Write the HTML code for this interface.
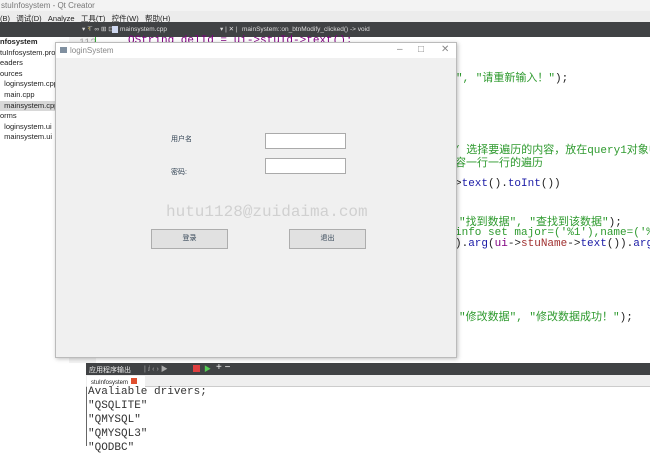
<!DOCTYPE html>
<html><head><meta charset="utf-8"><style>
*{margin:0;padding:0;box-sizing:border-box}
body{width:650px;height:446px;overflow:hidden;background:#fff;position:relative;font-family:"Liberation Sans","Noto Sans CJK SC",sans-serif;font-size:8px;color:#222}
.a{position:absolute;white-space:nowrap}
.mono{font-family:"Liberation Mono","Noto Sans CJK SC",monospace;font-size:11px}
.g{color:#2e9a2e}
.p{color:#800080}
.b{color:#1a1aa6}
</style></head><body>
<div class="a" style="left:0;top:0;width:650px;height:11px;background:#f3f3f3;color:#777;font-size:8px;padding:1px 0 0 1px">stuInfosystem - Qt Creator</div>
<div class="a" style="left:0;top:11px;width:650px;height:11px;background:#ececec;font-size:7.5px;padding:2px 0 0 0">(B)&nbsp;&nbsp;&nbsp;调试(D)&nbsp;&nbsp;&nbsp;Analyze&nbsp;&nbsp;&nbsp;工具(T)&nbsp;&nbsp;&nbsp;控件(W)&nbsp;&nbsp;&nbsp;帮助(H)</div>
<div class="a" style="left:0;top:22px;width:650px;height:15px;background:#404244;color:#ddd;font-size:6.5px;padding:4px 0 0 0">
<span class="a" style="left:82px;top:3px">▾ ⊤ ∞ ⊞ ⊡</span>
<span class="a" style="left:88px;top:3px;color:#e0c040">‹</span>
<span class="a" style="left:112px;top:4px;width:6px;height:7px;background:#cfd8f0"></span>
<span class="a" style="left:120px;top:4px">mainsystem.cpp</span>
<span class="a" style="left:220px;top:3px">▾ | ✕ |</span>
<span class="a" style="left:242px;top:4px">mainSystem::on_btnModify_clicked() -&gt; void</span>
</div>
<div class="a" style="left:0;top:37px;width:69px;height:326px;background:#fff;font-size:7.5px;line-height:10.6px">
<div style="font-weight:bold">nfosystem</div>
<div>tuInfosystem.pro</div>
<div>eaders</div>
<div>ources</div>
<div>&nbsp;&nbsp;loginsystem.cpp</div>
<div>&nbsp;&nbsp;main.cpp</div>
<div style="background:#d8d8d8">&nbsp;&nbsp;mainsystem.cpp</div>
<div>orms</div>
<div>&nbsp;&nbsp;loginsystem.ui</div>
<div>&nbsp;&nbsp;mainsystem.ui</div>
</div>
<div class="a" style="left:69px;top:37px;width:27px;height:326px;background:#f3f3f3;color:#aaa;font-size:11px;padding:0 0 0 10px">112</div>
<div class="a" style="left:95px;top:37px;width:1px;height:10px;background:#3a3"></div>
<div class="a mono" style="left:128px;top:35px;color:#800080">QString delId = ui-&gt;stuId-&gt;text();</div>
<div class="a mono" style="left:456px;top:69px"><span class="g">", "请重新输入！"</span>);</div>
<div class="a mono g" style="left:453px;top:141px">/ 选择要遍历的内容，放在query1对象中</div>
<div class="a mono g" style="left:455px;top:154px">容一行一行的遍历</div>
<div class="a mono" style="left:455px;top:178px">&gt;<span class="b">text</span>().<span class="b">toInt</span>())</div>
<div class="a mono" style="left:459px;top:213px"><span class="g">"找到数据", "查找到该数据"</span>);</div>
<div class="a mono g" style="left:455px;top:227px">info set major=('%1'),name=('%</div>
<div class="a mono" style="left:455px;top:238px">).<span class="b">arg</span>(<span class="p">ui</span>-&gt;<span style="color:#a03030">stuName</span>-&gt;<span class="b">text</span>()).<span class="b">arg</span></div>
<div class="a mono" style="left:459px;top:308px"><span class="g">"修改数据", "修改数据成功！"</span>);</div>
<div class="a" style="left:55px;top:42px;width:402px;height:316px;background:#f0f0f0;border:1px solid #bbb;box-shadow:1px 1px 4px rgba(0,0,0,.25)">
<div style="height:15px;background:#fff;font-size:8px;color:#888;padding:3px 0 0 4px"><span style="display:inline-block;width:7px;height:6px;background:#8090a0;margin-right:3px"></span>loginSystem
<span class="a" style="left:341px;top:1px;font-size:10px">–</span><span class="a" style="left:362px;top:1px;font-size:10px">□</span><span class="a" style="left:385px;top:1px;font-size:10px">✕</span></div>
<div class="a" style="left:115px;top:91px;color:#345;font-size:7px">用户名</div>
<div class="a" style="left:115px;top:124px;color:#345;font-size:7px">密码:</div>
<div class="a" style="left:209px;top:90px;width:81px;height:16px;background:#fff;border:1px solid #aaa"></div>
<div class="a" style="left:209px;top:115px;width:81px;height:16px;background:#fff;border:1px solid #aaa"></div>
<div class="a" style="left:95px;top:186px;width:77px;height:20px;background:#e1e1e1;border:1px solid #adadad;text-align:center;line-height:18px;color:#345;font-size:7px">登录</div>
<div class="a" style="left:233px;top:186px;width:77px;height:20px;background:#e1e1e1;border:1px solid #adadad;text-align:center;line-height:18px;color:#345;font-size:7px">退出</div>
<div class="a" style="left:110px;top:160px;font-family:'Liberation Mono',monospace;font-size:16px;color:rgba(150,150,150,.35)">hutu1128@zuidaima.com</div>
</div>
<div class="a" style="left:86px;top:363px;width:564px;height:12px;background:#404244;color:#eee;font-size:7px;padding:2px 0 0 3px">应用程序输出
<span class="a" style="left:58px;top:1px;color:#aaa">| ⅈ ‹ › ▶</span><span class="a" style="left:107px;top:2px;width:7px;height:7px;background:#e04040"></span><span class="a" style="left:118px;top:1px;color:#5c5">▶</span><span class="a" style="left:130px;top:-1px;font-size:10px">+ −</span></div>
<div class="a" style="left:86px;top:375px;width:564px;height:12px;background:#efefef;border-bottom:1px solid #ccc"></div>
<div class="a" style="left:87px;top:376px;width:58px;height:11px;background:#fff;font-size:6px;padding:2px 0 0 4px">stuInfosystem<span style="display:inline-block;width:6px;height:6px;background:#e05030;margin-left:3px"></span></div>
<div class="a" style="left:86px;top:387px;width:1px;height:59px;background:#666"></div>
<div class="a" style="left:88px;top:385px;font-family:'Liberation Mono',monospace;font-size:11px;line-height:14px;color:#333">Avaliable drivers;<br>"QSQLITE"<br>"QMYSQL"<br>"QMYSQL3"<br>"QODBC"</div>
</body></html>
